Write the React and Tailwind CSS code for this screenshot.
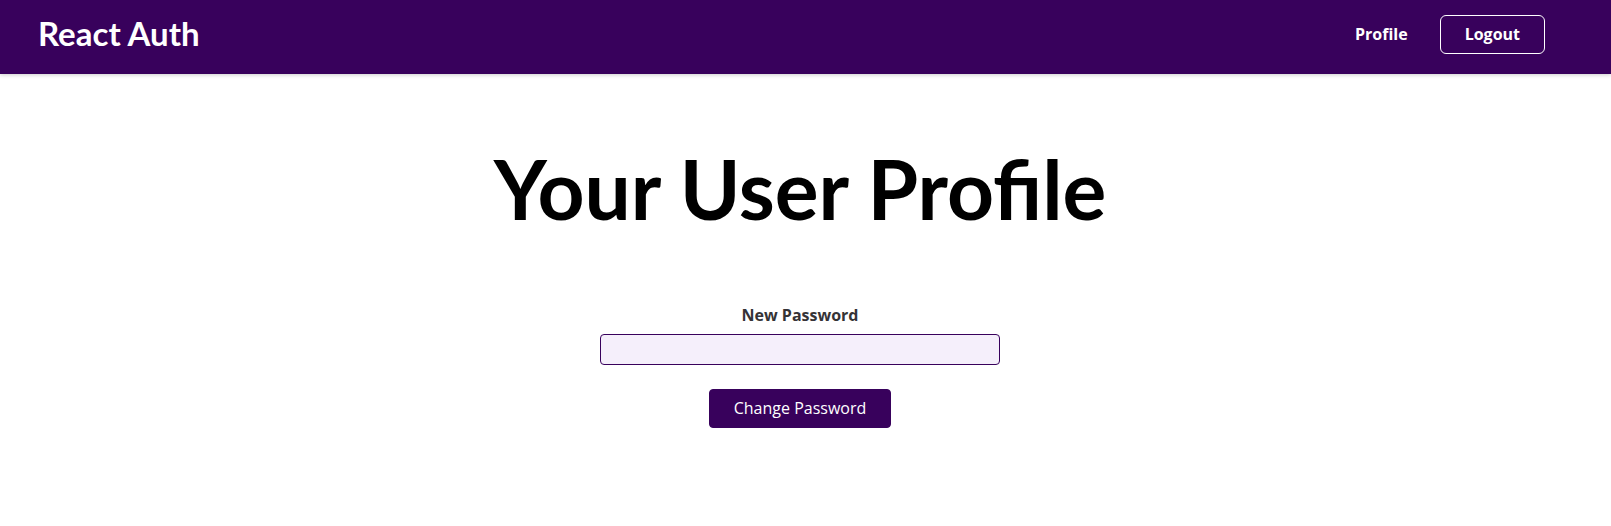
export default function App() {
  return (
    <div className="min-h-[526px] bg-white" style={{ fontFamily: '"Open Sans", sans-serif' }}>
      <header className="relative z-10 flex h-[74px] w-full items-center justify-between bg-[#38015c] pb-[6px] pl-[38px] pr-[50px] shadow-[0_1px_4px_rgba(0,0,0,0.2)]">
        <div className="m-0 text-[33px] font-bold leading-[1.2] text-white" style={{ fontFamily: 'Lato, sans-serif' }}>
          React Auth
        </div>
        <nav>
          <ul className="m-0 flex list-none items-baseline p-0">
            <li className="mx-4">
              <a href="#" className="text-[16px] font-bold text-white no-underline">Profile</a>
            </li>
            <li className="mx-4">
              <button className="cursor-pointer rounded-[6px] border border-white bg-transparent px-6 py-2 text-[16px] font-bold leading-[21px] text-white">
                Logout
              </button>
            </li>
          </ul>
        </nav>
      </header>
      <main className="w-[1600px]">
        <section className="mx-auto pt-[65px] text-center">
          <h1 className="m-0 text-[82px] font-bold leading-[98px] text-black" style={{ fontFamily: 'Lato, sans-serif' }}>
            Your User Profile
          </h1>
          <form className="mx-auto mt-[67px] w-[95%] max-w-[400px]">
            <div>
              <label className="mb-2 block text-[16px] font-bold leading-[22px] text-[#353336]">New Password</label>
              <input
                type="password"
                className="block h-[31px] w-full rounded-[4px] border border-[#38015c] bg-[#f5effb] p-1 text-[16px] outline-none"
              />
            </div>
            <div className="mt-6">
              <button
                type="button"
                className="cursor-pointer rounded-[4px] border border-[#38015c] bg-[#38015c] px-6 py-2 text-[16px] leading-[21px] text-white"
              >
                Change Password
              </button>
            </div>
          </form>
        </section>
      </main>
    </div>
  );
}
